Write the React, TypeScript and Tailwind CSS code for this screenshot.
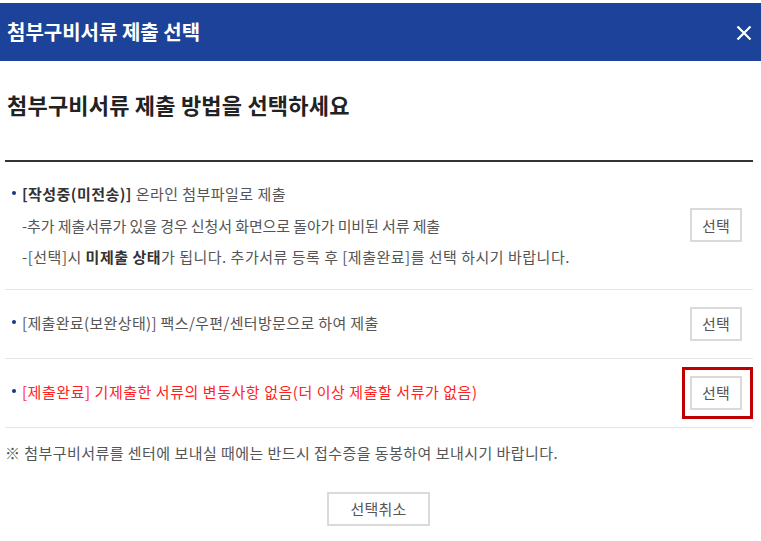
import React from "react";

const font = { fontFamily: '"Noto Sans CJK KR", "Noto Sans", sans-serif' };

function Btn({ label = "선택" }: { label?: string }) {
  return (
    <button className="h-[34px] w-[52px] border-2 border-[#dadada] bg-white text-[15px] leading-none tracking-[0.2px] text-[#555]">
      {label}
    </button>
  );
}

function Bullet() {
  return <span className="mr-[6px] inline-block h-[4px] w-[4px] translate-y-[-3px] rounded-full bg-[#1a3385] align-middle" />;
}

export default function App() {
  return (
    <div className="h-[541px] w-[761px] overflow-hidden bg-white" style={font}>
      <div className="mt-[3px] flex h-[58px] items-center justify-between bg-[#1d4299] pl-[7px] pr-[9px]">
        <span className="text-[20px] font-bold tracking-[0px] text-white">첨부구비서류 제출 선택</span>
        <svg width="16" height="16" viewBox="0 0 16 16" className="mt-[2px]">
          <path d="M1.5 1.5 L14.5 14.5 M14.5 1.5 L1.5 14.5" stroke="white" strokeWidth="2.2" />
        </svg>
      </div>

      <div className="pl-[5px] pr-[8px]">
        <div className="h-[99px] pl-[2px] pt-[28px]">
          <h1 className="text-[22px] font-bold leading-[30px] tracking-[0.2px] text-[#222]">
            첨부구비서류 제출 방법을 선택하세요
          </h1>
        </div>
        <div className="h-[2px] bg-[#333]" />

        <div className="flex items-center justify-between border-b border-[#e6e6e6] py-[16px] pl-[7px] pr-[11px]">
          <div className="text-[15px] leading-[31.5px] text-[#555]">
            <div className="tracking-[0.45px]">
              <Bullet />
              <b className="font-bold text-[#333]">[작성중(미전송)]</b> 온라인 첨부파일로 제출
            </div>
            <div className="pl-[10px] tracking-[-0.1px]">-추가 제출서류가 있을 경우 신청서 화면으로 돌아가 미비된 서류 제출</div>
            <div className="pl-[10px] tracking-[0.5px]">
              -[선택]시 <b className="font-bold text-[#333]">미제출 상태</b>가 됩니다. 추가서류 등록 후 [제출완료]를 선택 하시기 바랍니다.
            </div>
          </div>
          <Btn />
        </div>

        <div className="flex h-[69px] items-center justify-between border-b border-[#e6e6e6] pl-[7px] pr-[11px]">
          <div className="text-[15px] tracking-[0.35px] text-[#555]">
            <Bullet />
            [제출완료(보완상태)] 팩스/우편/센터방문으로 하여 제출
          </div>
          <Btn />
        </div>

        <div className="flex h-[69px] items-center justify-between border-b border-[#e6e6e6] pl-[7px] pr-[11px]">
          <div className="text-[15px] tracking-[0.55px] text-[#f22]">
            <Bullet />
            [제출완료] 기제출한 서류의 변동사항 없음(더 이상 제출할 서류가 없음)
          </div>
          <div className="relative">
            <Btn />
            <div className="pointer-events-none absolute -bottom-[9px] -left-[8px] -right-[11px] -top-[9px] border-[3px] border-[#c00000]" />
          </div>
        </div>

        <div className="pt-[15px] text-[15px] leading-[20px] tracking-[0.45px] text-[#555]">
          ※ 첨부구비서류를 센터에 보내실 때에는 반드시 접수증을 동봉하여 보내시기 바랍니다.
        </div>

        <div className="mt-[29px] flex justify-center pr-[1px]">
          <button className="h-[34px] w-[103px] border-2 border-[#dadada] bg-white text-[15px] leading-none tracking-[0.2px] text-[#555]">
            선택취소
          </button>
        </div>
      </div>
    </div>
  );
}
